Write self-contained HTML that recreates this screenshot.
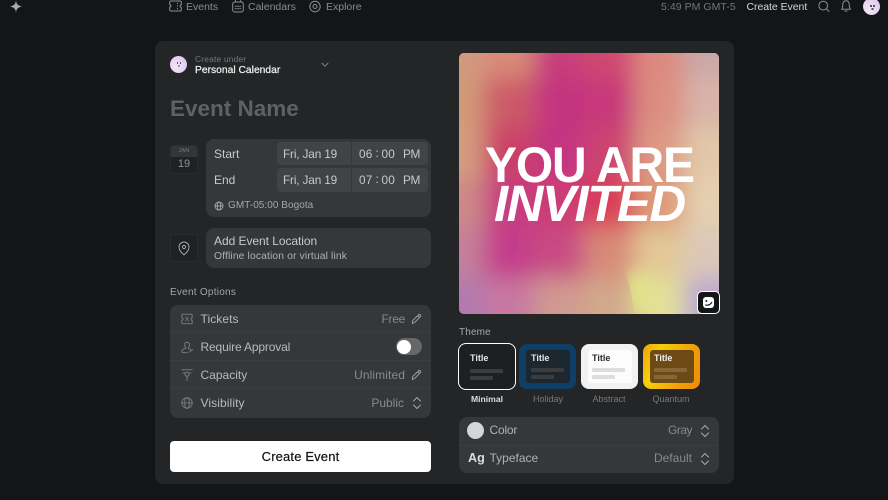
<!DOCTYPE html>
<html><head><meta charset="utf-8"><style>
*{box-sizing:border-box;margin:0;padding:0}
html,body{width:888px;height:500px;overflow:hidden;background:#131517;font-family:"Liberation Sans",sans-serif}
.a{position:absolute;white-space:nowrap;line-height:1}
svg{position:absolute;fill:none;stroke-linecap:round;stroke-linejoin:round}
.box{position:absolute;background:#35373a;border-radius:8px}
.dt{position:absolute;background:#414345;border-radius:4px}
.theme{position:absolute;top:344px;width:57px;height:45px;border-radius:8px}
.inner{position:absolute;left:7px;top:6px;width:44px;height:33px;border-radius:3px}
.tt{position:absolute;font-size:9px;font-weight:bold;line-height:1;left:12px;top:10px}
.l1,.l2{position:absolute;left:12px;height:4px;border-radius:1px}
.l1{top:24px;width:33px}.l2{top:31px;width:23px}
.lab{position:absolute;top:394px;font-size:9px;line-height:10px;color:#77797b;white-space:nowrap;text-align:center;width:60px}
.sep{position:absolute;height:1px;background:#3b3d40}
.nav{top:2px;font-size:10.5px;color:#8b8c8d}
.d{font-size:11.8px;color:#c8c9c9;letter-spacing:-.15px}
.t{font-size:12px;color:#c8c9c9}
.o{left:200.5px;font-size:12px;color:#b8b9ba}
.v{font-size:12px;color:#88898b;text-align:right}
</style></head><body>
<!-- nav -->
<svg style="left:9px;top:0" width="14" height="14" viewBox="0 0 14 14"><path d="M7 0.5C7.6 4.2 8.6 5.5 13 6.5C8.6 7.5 7.6 8.8 7 12.5C6.4 8.8 5.4 7.5 1 6.5C5.4 5.5 6.4 4.2 7 .5Z" fill="#a8a9aa"/></svg>
<svg style="left:169px;top:0" width="13" height="12" viewBox="0 0 13 12" stroke="#8d8e8f" stroke-width="1"><path d="M2 1H11A1.3 1.3 0 0 1 12.3 2.3V4.8A1.2 1.2 0 0 0 12.3 7.2V9.7A1.3 1.3 0 0 1 11 11H2A1.3 1.3 0 0 1 .7 9.7V7.2A1.2 1.2 0 0 0 .7 4.8V2.3A1.3 1.3 0 0 1 2 1Z"/><path d="M8.5 3V3.6M8.5 5.7V6.3M8.5 8.4V9"/></svg>
<div class="a nav" style="left:186px">Events</div>
<svg style="left:232px;top:0" width="12" height="13" viewBox="0 0 12 13" stroke="#8d8e8f" stroke-width="1"><rect x=".7" y="2" width="10.6" height="10" rx="2"/><path d="M3.5 .6V2.4M8.5 .6V2.4M3.3 6.2H8.7M3.3 8.8H8.7" stroke-dasharray="1 1.2"/></svg>
<div class="a nav" style="left:248px">Calendars</div>
<svg style="left:309px;top:0" width="12" height="13" viewBox="0 0 12 13" stroke="#8d8e8f" stroke-width="1"><circle cx="6" cy="6.5" r="5.2"/><circle cx="6" cy="6.5" r="2"/></svg>
<div class="a nav" style="left:326px">Explore</div>
<div class="a" style="left:661px;top:2px;font-size:10.5px;color:#747576;letter-spacing:.05px">5:49 PM GMT-5</div>
<div class="a" style="left:746.5px;top:2px;font-size:10.5px;color:#d4d5d5;letter-spacing:-.05px">Create Event</div>
<svg style="left:818px;top:0" width="12" height="13" viewBox="0 0 12 13" stroke="#8d8e8f" stroke-width="1"><circle cx="5.2" cy="5.6" r="4.4"/><path d="M8.5 8.8L11 11.4"/></svg>
<svg style="left:840px;top:0" width="12" height="13" viewBox="0 0 12 13" stroke="#8d8e8f" stroke-width="1"><path d="M2 8.5C2.8 7.5 2.6 6 2.8 4.5C3 1.8 4.5 .8 6 .8C7.5 .8 9 1.8 9.2 4.5C9.4 6 9.2 7.5 10.4 9.3H1.6ZM4.8 10.8C5.4 11.4 6.6 11.4 7.2 10.8"/></svg>
<div class="a" style="left:863px;top:-2px;width:17px;height:17px;border-radius:50%;background:radial-gradient(circle at 35% 65%,#f3e6f6,#dcc0ee)"></div>
<div class="a" style="left:870px;top:5px;width:1.5px;height:1.5px;background:#555;box-shadow:3px 0 #555,1.5px 3px #555"></div>
<!-- card -->
<div class="a" style="left:155px;top:41px;width:579px;height:443px;background:#232527;border-radius:8px"></div>
<!-- left -->
<div class="a" style="left:170px;top:56px;width:17px;height:17px;border-radius:50%;background:radial-gradient(circle at 35% 65%,#f3e6f6,#dcc0ee)"></div>
<div class="a" style="left:176.5px;top:62px;width:1.5px;height:1.5px;background:#555;box-shadow:3px 0 #555,1.5px 3px #555"></div>
<div class="a" style="left:195px;top:54.5px;font-size:8.4px;color:#77797b;letter-spacing:.2px">Create under</div>
<div class="a" style="left:195px;top:65.5px;font-size:10.3px;color:#eee;-webkit-text-stroke:.25px #eee">Personal Calendar</div>
<svg style="left:321px;top:62px" width="8" height="6" viewBox="0 0 8 6" stroke="#8d8e8f" stroke-width=".9"><path d="M1 1.2L4 4.2L7 1.2"/></svg>
<div class="a" style="left:170px;top:98px;font-size:22.5px;font-weight:bold;color:#606163">Event Name</div>
<!-- date -->
<div class="a" style="left:170px;top:145px;width:28px;height:29px;border:1px solid #2a2c2e;background:#1f2123;border-radius:4px;overflow:hidden"><div style="height:11px;background:#333538"></div></div>
<div class="a" style="left:170px;top:149px;width:28px;text-align:center;font-size:5.5px;color:#77797b">JAN</div>
<div class="a" style="left:170px;top:159px;width:28px;text-align:center;font-size:11px;color:#909192">19</div>
<div class="box" style="left:206px;top:139px;width:225px;height:78px"></div>
<div class="a t" style="left:214px;top:148px">Start</div>
<div class="a t" style="left:214px;top:174px">End</div>
<div class="dt" style="left:277px;top:142px;width:151px;height:23px"></div>
<div class="dt" style="left:277px;top:168px;width:151px;height:24px"></div>
<div class="a" style="left:351px;top:142px;width:1px;height:50px;background:#35373a"></div>
<div class="a d" style="left:283px;top:148.5px">Fri, Jan 19</div>
<div class="a d" style="left:283px;top:174.5px">Fri, Jan 19</div>
<div class="a d" style="left:359px;top:148.5px;letter-spacing:.2px">06</div><div class="a d" style="left:375.5px;top:148px">:</div><div class="a d" style="left:381.5px;top:148.5px;letter-spacing:.2px">00</div>
<div class="a d" style="left:359px;top:174.5px;letter-spacing:.2px">07</div><div class="a d" style="left:375.5px;top:174px">:</div><div class="a d" style="left:381.5px;top:174.5px;letter-spacing:.2px">00</div>
<div class="a d" style="left:403px;top:148.5px;letter-spacing:-.4px">PM</div>
<div class="a d" style="left:403px;top:174.5px;letter-spacing:-.4px">PM</div>
<svg style="left:214px;top:200.5px" width="10" height="10" viewBox="0 0 10 10" stroke="#a4a5a6" stroke-width=".9"><circle cx="5" cy="5" r="4"/><ellipse cx="5" cy="5" rx="1.8" ry="4"/><path d="M1 5H9"/></svg>
<div class="a" style="left:228px;top:201px;font-size:10px;color:#a4a5a6;letter-spacing:.05px">GMT-05:00 Bogota</div>
<!-- location -->
<div class="a" style="left:170px;top:234px;width:28px;height:28px;border:1px solid #2a2c2e;background:#1f2123;border-radius:4px"></div>
<svg style="left:177px;top:240px" width="14" height="16" viewBox="0 0 14 16" stroke="#a4a5a6" stroke-width="1"><path d="M7 14.8C4 12.5 2 10 2 7A5 5 0 0 1 12 7C12 10 10 12.5 7 14.8Z"/><circle cx="7" cy="7" r="1.6"/></svg>
<div class="box" style="left:206px;top:228px;width:225px;height:40px"></div>
<div class="a" style="left:214px;top:235px;font-size:12px;color:#c8c9c9;letter-spacing:-.05px">Add Event Location</div>
<div class="a" style="left:214px;top:252px;font-size:10.3px;color:#b0b1b2;letter-spacing:.14px">Offline location or virtual link</div>
<div class="a" style="left:170px;top:287.5px;font-size:10px;color:#a4a5a6;letter-spacing:.25px">Event Options</div>
<!-- options -->
<div class="box" style="left:170px;top:305px;width:261px;height:113px"></div>
<div class="sep" style="left:170px;top:332px;width:261px"></div>
<div class="sep" style="left:170px;top:360px;width:261px"></div>
<div class="sep" style="left:170px;top:388px;width:261px"></div>
<svg style="left:181px;top:313px" width="12" height="12" viewBox="0 0 12 12" stroke="#77797b" stroke-width="1"><path d="M2 1.2H10A1 1 0 0 1 11.2 2.2V4.8A1.2 1.2 0 0 0 11.2 7.2V9.8A1 1 0 0 1 10 10.8H2A1 1 0 0 1 .8 9.8V7.2A1.2 1.2 0 0 0 .8 4.8V2.2A1 1 0 0 1 2 1.2Z"/><path d="M4.5 4L7.5 8M7.5 4L4.5 8" stroke-width=".8"/></svg>
<svg style="left:181px;top:341px" width="13" height="13" viewBox="0 0 13 13" stroke="#77797b" stroke-width="1"><path d="M6 1.2C7.8 1.2 8.8 2.7 8.4 4.5C8.1 5.8 7.4 6.6 7.2 7.2C7.4 8 9 8.1 10 8.6M5 7C3 7.6 1 8.6 .9 10.3C.8 11.2 1.4 11.6 2.4 11.6H6.3M6 1.2C4.2 1.2 3.3 2.8 3.7 4.5C3.9 5.3 4.4 6 4.8 6.6M8.2 11.2L11.6 8.6"/></svg>
<svg style="left:181px;top:369px" width="12" height="12" viewBox="0 0 12 12" stroke="#77797b" stroke-width="1"><path d="M.8 .8H11.2"/><circle cx="6" cy="5.3" r="2"/><path d="M3.5 4H2M8.5 4H10M6 7.3V11.5"/></svg>
<svg style="left:181px;top:397px" width="12" height="12" viewBox="0 0 12 12" stroke="#77797b" stroke-width="1"><circle cx="6" cy="6" r="5.2"/><ellipse cx="6" cy="6" rx="2.4" ry="5.2"/><path d="M.8 6H11.2"/></svg>
<div class="a o" style="top:313px;letter-spacing:.08px">Tickets</div>
<div class="a o" style="top:341px;letter-spacing:-.15px">Require Approval</div>
<div class="a o" style="top:369px">Capacity</div>
<div class="a o" style="top:397px;letter-spacing:.1px">Visibility</div>
<div class="a v" style="right:483px;top:313px;letter-spacing:-.3px">Free</div>
<div class="a v" style="right:483px;top:369px;letter-spacing:.1px">Unlimited</div>
<div class="a v" style="right:484px;top:397px">Public</div>
<svg style="left:411px;top:313px" width="11" height="12" viewBox="0 0 11 12" stroke="#a4a5a6" stroke-width=".9"><path d="M1.2 10.3L1.8 7.5L7.5 1.8A1.2 1.2 0 0 1 9.3 3.6L3.6 9.6ZM6.7 2.7L8.5 4.5"/></svg>
<svg style="left:411px;top:369px" width="11" height="12" viewBox="0 0 11 12" stroke="#a4a5a6" stroke-width=".9"><path d="M1.2 10.3L1.8 7.5L7.5 1.8A1.2 1.2 0 0 1 9.3 3.6L3.6 9.6ZM6.7 2.7L8.5 4.5"/></svg>
<svg style="left:411.5px;top:396px" width="10" height="14" viewBox="0 0 10 14" stroke="#a4a5a6" stroke-width="1"><path d="M1.5 5L5 1.5L8.5 5M1.5 9L5 12.5L8.5 9"/></svg>
<div class="a" style="left:396px;top:338px;width:26px;height:17px;border-radius:9px;background:#666769"></div>
<div class="a" style="left:397px;top:340px;width:14px;height:14px;border-radius:50%;background:#fff"></div>
<div class="a" style="left:170px;top:441px;width:261px;height:31px;background:#fff;border-radius:4px"></div>
<div class="a" style="left:170px;top:450px;width:261px;text-align:center;font-size:13px;color:#131517;letter-spacing:.15px;-webkit-text-stroke:.2px #131517">Create Event</div>
<!-- image -->
<div class="a" style="left:459px;top:53px;width:260px;height:261px;border-radius:5px;overflow:hidden;background:#dca68e">
<svg style="left:0;top:0" width="260" height="261" viewBox="0 0 260 261">
<defs>
<filter id="b1" filterUnits="userSpaceOnUse" x="-80" y="-80" width="420" height="420"><feGaussianBlur stdDeviation="12"/></filter>
<filter id="b2" filterUnits="userSpaceOnUse" x="-80" y="-80" width="420" height="420"><feGaussianBlur stdDeviation="8"/></filter>
<clipPath id="cp"><path d="M158 200C168 215 172 240 176 261H260V190Z"/></clipPath>
</defs>
<g filter="url(#b1)" shape-rendering="crispEdges">
<rect x="-60" y="-60" width="86" height="86" fill="#cf9a7e"/><rect x="25" y="-60" width="51" height="86" fill="#d98a78"/><rect x="75" y="-60" width="51" height="86" fill="#c83c7c"/><rect x="125" y="-60" width="51" height="86" fill="#cf4a70"/><rect x="175" y="-60" width="51" height="86" fill="#dc8a80"/><rect x="225" y="-60" width="90" height="86" fill="#c9a8a8"/>
<rect x="-60" y="25" width="86" height="51" fill="#d29a78"/><rect x="25" y="25" width="51" height="51" fill="#cc5a68"/><rect x="75" y="25" width="51" height="51" fill="#c43580"/><rect x="125" y="25" width="51" height="51" fill="#c8387a"/><rect x="175" y="25" width="51" height="51" fill="#dc8e80"/><rect x="225" y="25" width="90" height="51" fill="#d8b4a8"/>
<rect x="-60" y="75" width="86" height="51" fill="#d49c80"/><rect x="25" y="75" width="51" height="51" fill="#cb3f68"/><rect x="75" y="75" width="51" height="51" fill="#c43582"/><rect x="125" y="75" width="51" height="51" fill="#cc4470"/><rect x="175" y="75" width="51" height="51" fill="#dc9a84"/><rect x="225" y="75" width="90" height="51" fill="#e2c8a8"/>
<rect x="-60" y="125" width="86" height="51" fill="#cd8a88"/><rect x="25" y="125" width="51" height="51" fill="#c63c80"/><rect x="75" y="125" width="51" height="51" fill="#cc3e74"/><rect x="125" y="125" width="51" height="51" fill="#d93c58"/><rect x="175" y="125" width="51" height="51" fill="#dd9a78"/><rect x="225" y="125" width="90" height="51" fill="#e4d0b0"/>
<rect x="-60" y="175" width="86" height="51" fill="#c4809a"/><rect x="25" y="175" width="51" height="51" fill="#c43c8a"/><rect x="75" y="175" width="51" height="51" fill="#c84c84"/><rect x="125" y="175" width="51" height="51" fill="#d88a78"/><rect x="175" y="175" width="51" height="51" fill="#e2c898"/><rect x="225" y="175" width="90" height="51" fill="#dcc8b8"/>
<rect x="-60" y="225" width="86" height="90" fill="#b07ab0"/><rect x="25" y="225" width="51" height="90" fill="#c878a0"/><rect x="75" y="225" width="51" height="90" fill="#d09a90"/><rect x="125" y="225" width="51" height="90" fill="#d2a88c"/><rect x="175" y="225" width="51" height="90" fill="#e4e098"/><rect x="225" y="225" width="90" height="90" fill="#bca8d0"/>
</g>
<g clip-path="url(#cp)" opacity=".7">
<ellipse cx="180" cy="238" rx="14" ry="22" fill="#e2ea88" filter="url(#b2)"/>
</g>
</svg>
</div>
<div class="a" style="left:484.5px;top:140px;font-size:50px;font-weight:bold;color:#fff;letter-spacing:-1.2px;transform:scaleX(.96);transform-origin:left">YOU ARE</div>
<div class="a" style="left:494px;top:178px;font-size:51px;font-weight:bold;font-style:italic;color:#fff;letter-spacing:-1.5px">INVITED</div>
<div class="a" style="left:697px;top:291px;width:23px;height:23px;background:#131517;border:1.5px solid #fff;border-radius:5px"></div>
<div class="a" style="left:703px;top:297px;width:11px;height:11px;background:#fff;border-radius:3px"></div>
<svg style="left:703px;top:297px" width="11" height="11" viewBox="0 0 11 11"><circle cx="3.4" cy="4" r="1" fill="#131517"/><path d="M2.5 8C5 8.5 7.5 7.5 8.8 5.3" stroke="#131517" stroke-width="1.1"/></svg>
<!-- theme -->
<div class="a" style="left:459px;top:327.5px;font-size:10px;color:#a4a5a6;letter-spacing:.15px">Theme</div>
<div class="theme" style="left:458px;top:343px;width:58px;height:47px;background:#1d1f21;border:1.5px solid #fff">
<div class="tt" style="color:#e5e5e6;left:11px;top:10px">Title</div><div class="l1" style="background:#3a3c3e;left:11px;top:25px"></div><div class="l2" style="background:#3a3c3e;left:11px;top:32px"></div></div>
<div class="theme" style="left:519px;background:#0f3f66;overflow:hidden"><div class="inner" style="background:#1d2730"></div>
<div class="tt" style="color:#e5e5e6">Title</div><div class="l1" style="background:#3a3c3e"></div><div class="l2" style="background:#3a3c3e"></div></div>
<div class="theme" style="left:581px;background:#f2f2f3"><div class="inner" style="background:#fcfcfc"></div>
<div class="tt" style="color:#2a2c2e;left:11px">Title</div><div class="l1" style="background:#dcdddf;left:11px"></div><div class="l2" style="background:#dcdddf;left:11px"></div></div>
<div class="theme" style="left:643px;background:linear-gradient(110deg,#f0a008,#f5cf08 25%,#f0a008 70%,#ef8a0a)"><div class="inner" style="background:#6e4a14"></div>
<div class="tt" style="color:#f0f0f0;left:11px">Title</div><div class="l1" style="background:#876638;left:11px"></div><div class="l2" style="background:#876638;left:11px"></div></div>
<div class="lab" style="left:457px;color:#dcdcdd;font-weight:bold;font-size:8.6px">Minimal</div>
<div class="lab" style="left:518px">Holiday</div>
<div class="lab" style="left:579px">Abstract</div>
<div class="lab" style="left:641px">Quantum</div>
<!-- color/typeface -->
<div class="box" style="left:459px;top:417px;width:260px;height:56px"></div>
<div class="sep" style="left:459px;top:445px;width:260px"></div>
<div class="a" style="left:467px;top:422px;width:17px;height:17px;border-radius:50%;background:#d4d5d7"></div>
<div class="a" style="left:468px;top:451.5px;font-size:12.6px;font-weight:bold;color:#dcdcdd">Ag</div>
<div class="a" style="left:489.5px;top:424px;font-size:12px;color:#b0b1b2;letter-spacing:-.2px">Color</div>
<div class="a" style="left:489.5px;top:452px;font-size:12px;color:#b0b1b2">Typeface</div>
<div class="a v" style="right:196px;top:424px;letter-spacing:-.5px">Gray</div>
<div class="a v" style="right:196px;top:452px">Default</div>
<svg style="left:699.5px;top:424px" width="10" height="14" viewBox="0 0 10 14" stroke="#a4a5a6" stroke-width="1.1"><path d="M1.5 5L5 1.5L8.5 5M1.5 9L5 12.5L8.5 9"/></svg>
<svg style="left:699.5px;top:452px" width="10" height="14" viewBox="0 0 10 14" stroke="#a4a5a6" stroke-width="1.1"><path d="M1.5 5L5 1.5L8.5 5M1.5 9L5 12.5L8.5 9"/></svg>
</body></html>
